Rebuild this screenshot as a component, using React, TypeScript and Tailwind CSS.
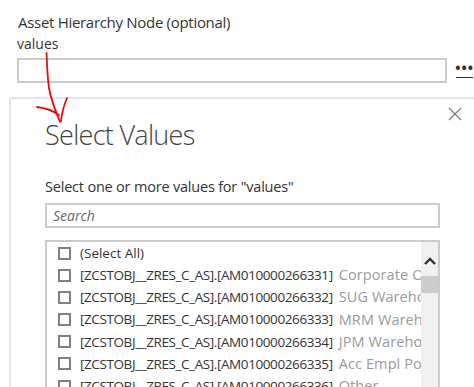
import React from "react";

const rows = [
  { id: "AM010000266331", desc: "Corporate Office" },
  { id: "AM010000266332", desc: "SUG Warehouse" },
  { id: "AM010000266333", desc: "MRM Warehouse" },
  { id: "AM010000266334", desc: "JPM Warehouse" },
  { id: "AM010000266335", desc: "Acc Empl Pool" },
  { id: "AM010000266336", desc: "Other" },
];

function Box() {
  return <span className="block w-[13px] h-[13px] border-2 border-[#808080] shrink-0" />;
}

export default function App() {
  return (
    <div
      className="relative w-[474px] h-[387px] overflow-hidden bg-white text-[#333]"
      style={{ fontFamily: '"Open Sans", "Noto Sans", sans-serif' }}
    >
      <div className="pl-[18px] pt-[11px]">
        <div className="text-[15px] leading-[22px] tracking-[-0.3px] text-[#333]">Asset Hierarchy Node (optional)</div>
        <div className="text-[14px] leading-[22px] text-[#333] -ml-[1px]">values</div>
        <div className="flex items-center mt-[3px] -ml-[1px]">
          <div className="w-[431px] h-[25px] border-2 border-[#cbcbcb] bg-white" />
          <div className="ml-[8px] flex flex-col items-center">
            <span className="text-[14px] leading-[10px] font-bold text-[#333] tracking-[1px]">•••</span>
            <span className="block w-[17px] h-[1px] bg-[#333] mt-[4px]" />
          </div>
        </div>
      </div>

      <div className="relative mt-[14px] ml-[9px] border-t-2 border-l-2 border-[#e4e4e4] pl-[34px] h-[300px]">
        <svg className="absolute right-[12px] top-[8px]" width="14" height="14" viewBox="0 0 14 14">
          <path d="M1 1 L13 13 M13 1 L1 13" stroke="#777" strokeWidth="1.1" fill="none" />
        </svg>
        <div className="pt-[18px] text-[27px] leading-[36px] font-light text-[#444] tracking-[-0.7px]">Select Values</div>
        <div className="mt-[23px] text-[14.5px] leading-[22px] text-[#333] tracking-[-0.2px]">Select one or more values for "values"</div>
        <div className="mt-[5px] w-[395px] h-[25px] border-2 border-[#cbcbcb] flex items-center pl-[6px]">
          <span className="text-[14px] italic text-[#666]">Search</span>
        </div>
        <div className="mt-[12px] w-[395px] h-[160px] border-2 border-r-0 border-b-0 border-[#cbcbcb] flex">
          <div className="flex-1 overflow-hidden">
            <div className="flex items-center h-[22px] pl-[11px] gap-[9px]">
              <Box />
              <span className="text-[13.5px] whitespace-nowrap text-[#333]">(Select All)</span>
            </div>
            {rows.map((r) => (
              <div key={r.id} className="flex items-center h-[22.2px] pl-[11px] gap-[9px] whitespace-nowrap">
                <Box />
                <span className="text-[13.5px] tracking-[-0.4px] text-[#333]">[ZCSTOBJ__ZRES_C_AS].[{r.id}]</span>
                <span className="text-[14.5px] tracking-[0.1px] text-[#9a9a9a] -ml-[3px]">{r.desc}</span>
              </div>
            ))}
          </div>
          <div className="w-[19px] bg-[#f0f0f0] border-r-2 border-[#cbcbcb] flex flex-col items-center">
            <svg className="mt-[14px]" width="14" height="10" viewBox="0 0 14 10">
              <path d="M2 8 L7 3 L12 8" stroke="#333" strokeWidth="2.4" fill="none" />
            </svg>
            <div className="mt-[10px] w-full h-[17px] bg-[#cdcdcd]" />
          </div>
        </div>
      </div>

      <svg className="absolute left-0 top-0 pointer-events-none" width="474" height="387">
        <path d="M46.5 53 C47 65 47.5 78 49 88 C51 100 55 110 60 122" stroke="#e01010" strokeWidth="1.8" fill="none" strokeLinecap="round" />
        <path d="M37 107 C45 108 52 110 59 115" stroke="#e01010" strokeWidth="1.8" fill="none" strokeLinecap="round" />
        <path d="M67 98 C64 105 62 112 61 121" stroke="#e01010" strokeWidth="1.8" fill="none" strokeLinecap="round" />
      </svg>
    </div>
  );
}
